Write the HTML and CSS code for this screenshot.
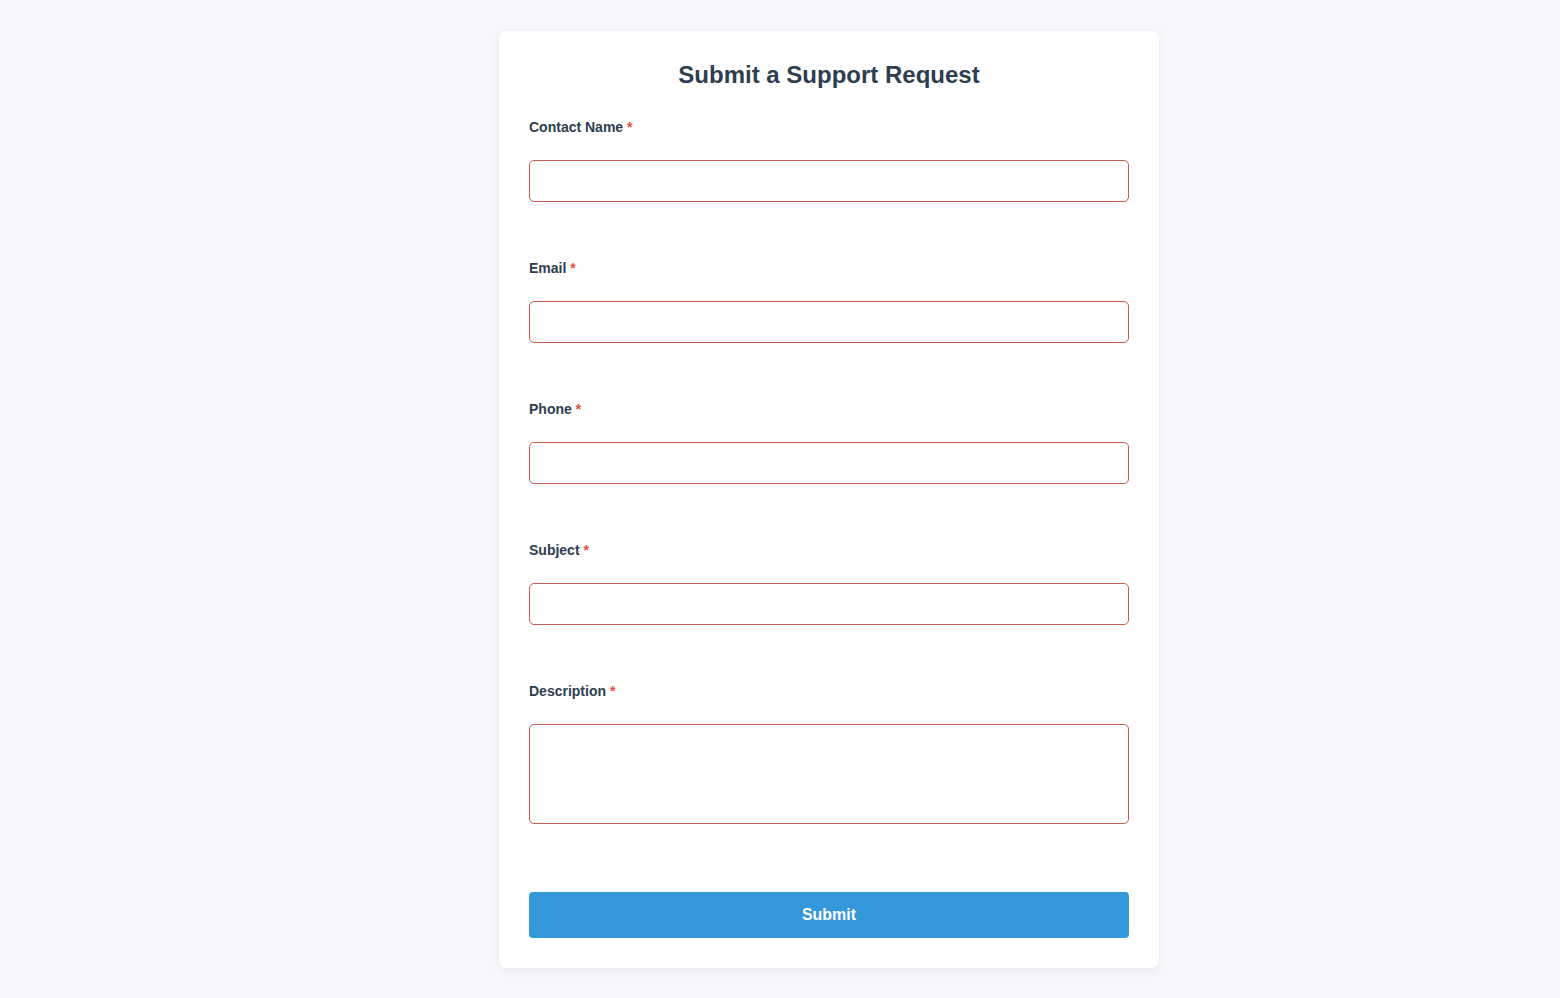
FILE: index.html
```html
<!DOCTYPE html>
<html lang="en">
<head>
    <meta charset="UTF-8">
    <title>Support Request</title>
    <link rel="stylesheet" href="styles.css">
</head>
<body>

<div class="card">
    <h1 class="card__title">Submit a Support Request</h1>

    <form class="form">
        <div class="form__group">
            <label class="form__label" for="name">Contact Name <span class="form__req">*</span></label>
            <input class="form__input" id="name" type="text">
        </div>

        <div class="form__group">
            <label class="form__label" for="email">Email <span class="form__req">*</span></label>
            <input class="form__input" id="email" type="email">
        </div>

        <div class="form__group">
            <label class="form__label" for="phone">Phone <span class="form__req">*</span></label>
            <input class="form__input" id="phone" type="tel">
        </div>

        <div class="form__group">
            <label class="form__label" for="subject">Subject <span class="form__req">*</span></label>
            <input class="form__input" id="subject" type="text">
        </div>

        <div class="form__group form__group--last">
            <label class="form__label" for="desc">Description <span class="form__req">*</span></label>
            <textarea class="form__input form__input--area" id="desc"></textarea>
        </div>

        <button class="form__submit" type="button">Submit</button>
    </form>
</div>

</body>
</html>
```

FILE: styles.css
```css
* {
    box-sizing: border-box;
    margin: 0;
    padding: 0;
}

:root {
    --text: #2c3e50;
    --bg: #f5f7fa;
    --error: #cd5a4e;
    --req: #e74c3c;
    --primary: #3498db;
}

body {
    background-color: var(--bg);
    color: var(--text);
    font-family: "Liberation Sans", Arial, sans-serif;
    padding: 31px 0 30px 98px;
}

.card {
    background-color: #fff;
    border-radius: 8px;
    box-shadow: 0 2px 10px rgba(0, 0, 0, 0.06);
    margin: 0 auto;
    padding: 30px;
    width: 660px;
}

.card__title {
    font-size: 24px;
    font-weight: bold;
    line-height: 28px;
    margin-bottom: 30px;
    text-align: center;
}

.form__group {
    display: flex;
    flex-direction: column;
    margin-bottom: 58px;
}

.form__group--last {
    margin-bottom: 68px;
}

.form__label {
    font-size: 14px;
    font-weight: bold;
    line-height: 16px;
    margin-bottom: 25px;
}

.form__req {
    color: var(--req);
}

.form__input {
    border: 1px solid var(--error);
    border-radius: 5px;
    display: block;
    font: 14px "Liberation Sans", Arial, sans-serif;
    height: 42px;
    outline: none;
    padding: 10px 12px;
    width: 100%;
}

.form__input--area {
    height: 100px;
    resize: none;
}

.form__submit {
    background-color: var(--primary);
    border: 0;
    border-radius: 4px;
    color: #fff;
    display: block;
    font: bold 16px "Liberation Sans", Arial, sans-serif;
    height: 46px;
    width: 100%;
}
```
